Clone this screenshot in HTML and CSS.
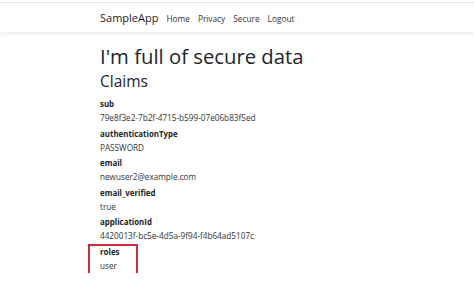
FILE: index.html
```html
<!DOCTYPE html>
<html>
<head>
<meta charset="utf-8">
<link rel="stylesheet" href="styles.css">
</head>
<body>
<header class="navbar">
  <div class="nav-inner">
    <span class="brand">SampleApp</span>
    <nav class="links">
      <span>Home</span>
      <span>Privacy</span>
      <span>Secure</span>
      <span>Logout</span>
    </nav>
  </div>
</header>
<main class="content">
  <h1 class="title">I'm full of secure data</h1>
  <h2 class="subtitle">Claims</h2>
  <dl class="claims">
    <div class="claim"><dt>sub</dt><dd>79e8f3e2-7b2f-4715-b599-07e06b83f5ed</dd></div>
    <div class="claim"><dt>authenticationType</dt><dd>PASSWORD</dd></div>
    <div class="claim"><dt>email</dt><dd>newuser2@example.com</dd></div>
    <div class="claim"><dt>email_verified</dt><dd>true</dd></div>
    <div class="claim"><dt>applicationId</dt><dd>4420013f-bc5e-4d5a-9f94-f4b64ad5107c</dd></div>
    <div class="claim highlight"><dt>roles</dt><dd>user</dd></div>
  </dl>
</main>
</body>
</html>
```
FILE: styles.css
```css
html, body {
  margin: 0;
  padding: 0;
  background: #fff;
}
body {
  font-family: "Open Sans", "Noto Sans", sans-serif;
  color: #212529;
}
.navbar {
  margin-top: 2px;
  border-top: 1px solid #e4e4e4;
  height: 29px;
  box-shadow: 0 2px 5px rgba(0,0,0,0.08);
  display: flex;
  align-items: center;
}
.nav-inner {
  margin-left: 100px;
  display: flex;
  align-items: center;
}
.brand {
  font-size: 11px;
  color: #222;
  margin-right: 8px;
}
.links {
  display: flex;
  gap: 8px;
  font-size: 8.3px;
  color: #333;
  padding-top: 1px;
}
.content {
  margin-left: 100px;
  padding-top: 10px;
}
.title {
  font-size: 20.3px;
  font-weight: 400;
  margin: 0;
  line-height: 28px;
  color: #212529;
}
.subtitle {
  font-size: 15.5px;
  font-weight: 400;
  margin: 0;
  line-height: 22px;
}
.claims {
  margin: 6px 0 0 0;
  display: flex;
  flex-direction: column;
  gap: 3.6px;
}
.claim {
  display: flex;
  flex-direction: column;
  margin-left: -12px;
  padding: 0 10px;
  width: fit-content;
  border: 2px solid transparent;
  margin-top: -2px;
  margin-bottom: -2px;
}
.claim dt {
  font-weight: 700;
  font-size: 7.9px;
  line-height: 13px;
}
.claim dd {
  margin: 0;
  font-size: 8.2px;
  line-height: 13px;
  color: #333;
}
.highlight {
  border-color: #d2283d;
  padding-right: 17px;
  padding-bottom: 1px;
}
```
